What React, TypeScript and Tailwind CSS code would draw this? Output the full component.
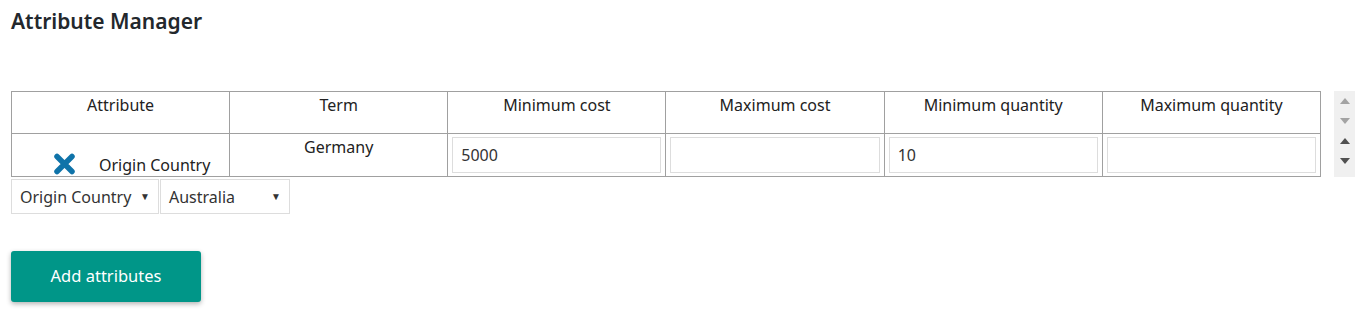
const columns = ['Attribute', 'Term', 'Minimum cost', 'Maximum cost', 'Minimum quantity', 'Maximum quantity'];

const RemoveIcon = () => (
  <svg width="23" height="22" viewBox="0 0 23 22" className="shrink-0">
    <path d="M4 3.5 L19 18.5 M19 3.5 L4 18.5" stroke="#0f73a9" strokeWidth="5.5" strokeLinecap="round" />
  </svg>
);

const Arrow = ({ up, dark }: { up: boolean; dark: boolean }) => (
  <svg width="10" height="6" viewBox="0 0 10 6">
    <path d={up ? 'M0 6 L5 0 L10 6 Z' : 'M0 0 L10 0 L5 6 Z'} fill={dark ? '#505050' : '#a3a3a3'} />
  </svg>
);

const CellInput = ({ value }: { value: string }) => (
  <input
    type="text"
    defaultValue={value}
    className="block w-full h-[36px] border border-[#dddddd] px-[8px] text-[16px] text-[#333] outline-none"
  />
);

const Select = ({ value, width }: { value: string; width: string }) => (
  <div className={`flex items-center justify-between h-[35px] border border-[#dddddd] pl-[8px] pr-[8px] ${width}`}>
    <span className="text-[16px] text-[#333]">{value}</span>
    <span className="text-[10px] text-[#333]">▼</span>
  </div>
);

export default function App() {
  return (
    <div className="bg-white w-[1360px] h-[322px] text-[#222] font-['Noto_Sans',sans-serif]">
      <div className="pl-[11px] pt-[7px]">
        <h1 className="text-[21px] font-semibold leading-[28px] text-[#23282d]">Attribute Manager</h1>
      </div>

      <div className="flex items-start mt-[56px] pl-[11px]">
        <table className="border-collapse w-[1310px] table-fixed">
          <thead>
            <tr className="h-[42px]">
              {columns.map((c) => (
                <th key={c} className="border border-[#a0a0a0] font-normal text-[16px] leading-[22px] align-top pt-[2px] text-[#222]">
                  {c}
                </th>
              ))}
            </tr>
          </thead>
          <tbody>
            <tr className="h-[43px]">
              <td className="border border-[#a0a0a0] p-0 align-bottom">
                <div className="flex items-end pl-[41px] pb-[1px]">
                  <RemoveIcon />
                  <span className="ml-[23px] text-[16px] leading-[20px]">Origin Country</span>
                </div>
              </td>
              <td className="border border-[#a0a0a0] text-center align-top text-[16px] leading-[22px] pt-[2px]">Germany</td>
              <td className="border border-[#a0a0a0] px-[4px] py-[2px]"><CellInput value="5000" /></td>
              <td className="border border-[#a0a0a0] px-[4px] py-[2px]"><CellInput value="" /></td>
              <td className="border border-[#a0a0a0] px-[4px] py-[2px]"><CellInput value="10" /></td>
              <td className="border border-[#a0a0a0] px-[4px] py-[2px]"><CellInput value="" /></td>
            </tr>
          </tbody>
        </table>
        <div className="ml-[13px] w-[21px] h-[86px] bg-[#f0f0f0] flex flex-col items-center pt-[7px] gap-[14px]">
          <Arrow up dark={false} />
          <Arrow up={false} dark={false} />
          <Arrow up dark />
          <Arrow up={false} dark />
        </div>
      </div>

      <div className="flex pl-[11px] mt-[2px]">
        <Select value="Origin Country" width="w-[148px]" />
        <div className="ml-[1px]">
          <Select value="Australia" width="w-[130px]" />
        </div>
      </div>

      <div className="pl-[11px] mt-[37px]">
        <button className="w-[190px] h-[51px] bg-[#009688] text-white text-[16.5px] rounded-[3px] shadow-[0_2px_5px_rgba(0,0,0,0.3)]">
          Add attributes
        </button>
      </div>
    </div>
  );
}
